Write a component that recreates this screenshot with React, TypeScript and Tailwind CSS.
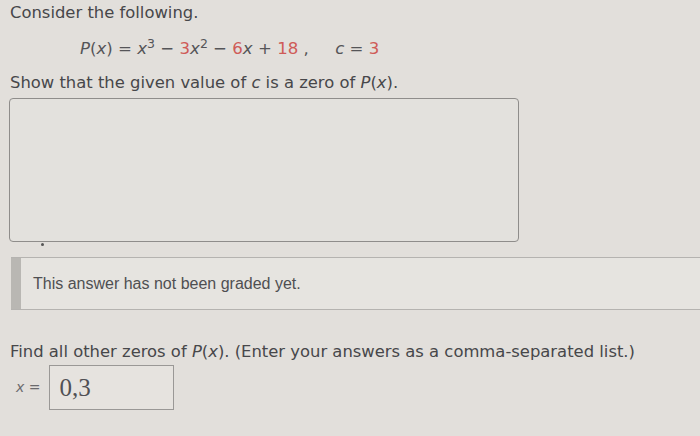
import React from 'react';

const Red = ({ children }: { children: React.ReactNode }) => (
    <span className="text-[#cf5b57]">{children}</span>
);

const App: React.FC = () => {
    return (
        <div className="w-[700px] h-[436px] overflow-hidden bg-[#e2dfdb] text-[#47474a] font-['DejaVu_Sans',sans-serif]">
            <div className="pl-[10px] pt-[3px] text-[16.4px] leading-[20px]">Consider the following.</div>

            {/* equation */}
            <div className="pl-[80px] pt-[16px] text-[16.6px] leading-[20px] text-[#555558] whitespace-pre">
                <i>P</i>(<i>x</i>) = <i>x</i>
                <sup className="text-[12.5px]">3</sup> − <Red>3</Red><i>x</i>
                <sup className="text-[12.5px]">2</sup> − <Red>6</Red><i>x</i> + <Red>18</Red> ,{'     '}
                <i>c</i> = <Red>3</Red>
            </div>

            <div className="pl-[10px] pt-[14px] text-[16.4px] leading-[20px]">
                Show that the given value of <i>c</i> is a zero of <i>P</i>(<i>x</i>).
            </div>

            {/* answer box */}
            <div className="ml-[9px] mt-[5px] w-[510px] h-[144px] rounded-[4px] border border-[#8f8d8b] bg-[#e3e1dd]"></div>
            <div className="ml-[41px] mt-[1px] w-[3px] h-[3px] rounded-full bg-[#555]"></div>

            {/* graded notice */}
            <div className="ml-[11px] mt-[11px] flex h-[53px] border-y border-[#b5b3b0] bg-[#e6e4e0]">
                <div className="w-[10px] bg-[#b9b7b3]"></div>
                <div className="pl-[12px] pt-[16px] text-[16px] leading-[20px] font-['Liberation_Sans',sans-serif] text-[#4f4f52]">
                    This answer has not been graded yet.
                </div>
            </div>

            <div className="pl-[10px] pt-[32px] text-[16.4px] leading-[20px]">
                Find all other zeros of <i>P</i>(<i>x</i>). (Enter your answers as a comma-separated list.)
            </div>

            <div className="flex items-center pl-[16px] mt-[3px]">
                <span className="text-[14px] text-[#6a6a6d]">
                    <i>x</i> =
                </span>
                <div className="ml-[9px] w-[125px] h-[45px] border border-[#9a9896] bg-[#e6e3df] pl-[9px] flex items-start pt-[3px]">
                    <span className="font-['Liberation_Serif',serif] text-[25px] text-[#505054]">0,3</span>
                </div>
            </div>
        </div>
    );
};

export default App;
